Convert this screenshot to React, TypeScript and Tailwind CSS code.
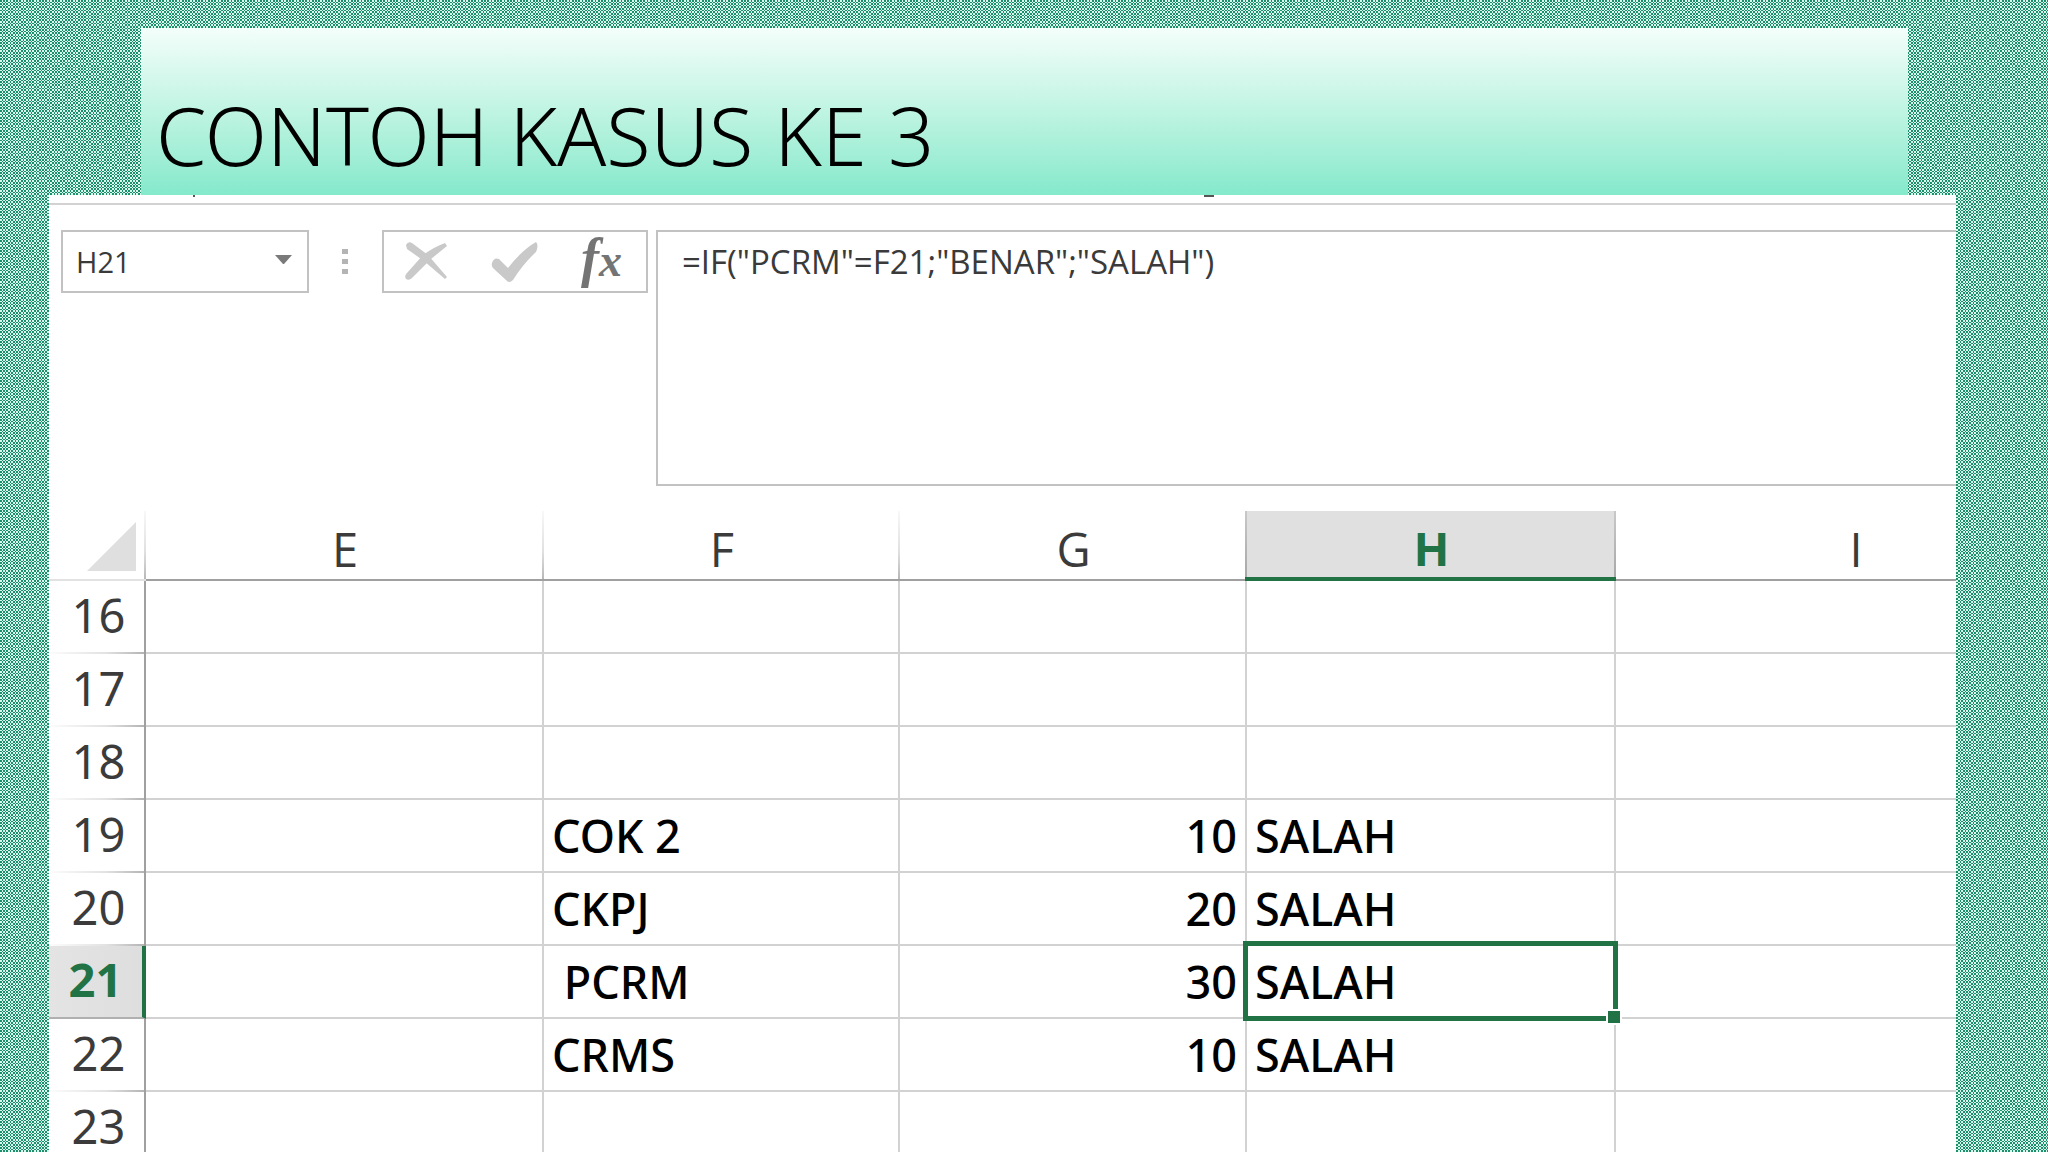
import type { ReactNode } from 'react';

type Row = { n: number; f?: string; g?: number; h?: string };

const rows: Row[] = [
  { n: 16 },
  { n: 17 },
  { n: 18 },
  { n: 19, f: 'COK 2', g: 10, h: 'SALAH' },
  { n: 20, f: 'CKPJ', g: 20, h: 'SALAH' },
  { n: 21, f: ' PCRM', g: 30, h: 'SALAH' },
  { n: 22, f: 'CRMS', g: 10, h: 'SALAH' },
  { n: 23 },
];

const columns = ['E', 'F', 'G', 'H', 'I'];
const ACTIVE_ROW = 21;
const ACTIVE_COL = 'H';

// Eight checker cells span thirteen pixels, which gives the woven look.
const edges = [0, 2, 3, 5, 6, 8, 10, 11, 13];
const tiles = Array.from({ length: 64 }, (_, i) => ({ x: i % 8, y: Math.floor(i / 8) })).filter(
  (t) => (t.x + t.y) % 2 === 0,
);

function CheckerBackdrop() {
  return (
    <svg className="absolute inset-0 h-full w-full" aria-hidden="true">
      <defs>
        <pattern id="checker" width="13" height="13" patternUnits="userSpaceOnUse">
          <rect width="13" height="13" fill="#d9f7ec" />
          {tiles.map((t) => (
            <rect
              key={`${t.x}-${t.y}`}
              x={edges[t.x]}
              y={edges[t.y]}
              width={edges[t.x + 1] - edges[t.x]}
              height={edges[t.y + 1] - edges[t.y]}
              fill="#1a8f69"
            />
          ))}
        </pattern>
      </defs>
      <rect width="100%" height="100%" fill="url(#checker)" />
    </svg>
  );
}

function CancelIcon() {
  return (
    <svg width="44" height="42" viewBox="0 0 44 42" fill="#c9c9c9" aria-hidden="true">
      <path d="M2 4 Q4 0 8 2 L24 14 L43 36 L41 38 L20 20 L3 8 Z" />
      <path d="M41 2 L43 5 L27 18 L8 37 Q5 40 2 38 Q0 35 3 32 L19 14 Q30 6 41 2 Z" />
    </svg>
  );
}

function EnterIcon() {
  return (
    <svg width="48" height="44" viewBox="0 0 48 44" fill="#c9c9c9" aria-hidden="true">
      <path d="M1 23 Q3 17 8 19 L17 28 Q31 10 45 2 Q48 5 45 12 Q32 24 22 40 Q18 44 15 40 L3 29 Q0 27 1 23 Z" />
    </svg>
  );
}

function IconButton({ label, children }: { label: string; children: ReactNode }) {
  return (
    <button type="button" aria-label={label} className="flex h-full items-center justify-center">
      {children}
    </button>
  );
}

function FormulaBar() {
  return (
    <div className="flex items-start pl-3 pt-[25px] font-['Open_Sans',sans-serif] text-[#3a3a3a]">
      <div className="flex h-[63px] w-[248px] items-center border-2 border-[#c2c2c2] pl-[13px] pr-[15px]">
        <input
          aria-label="Name box"
          defaultValue="H21"
          className="min-w-0 flex-1 bg-transparent text-[29px] outline-none"
        />
        <button type="button" aria-label="Open name list" className="pb-1">
          <svg width="17" height="9" viewBox="0 0 17 9" fill="#7a7a7a" aria-hidden="true">
            <path d="M0 0 H17 L9 9 H8 Z" />
          </svg>
        </button>
      </div>
      <div className="ml-[33px] mr-[34px] flex h-[63px] flex-col items-center justify-center gap-[5px]">
        <span className="h-[5px] w-[6px] bg-[#b4b4b4]" />
        <span className="h-[5px] w-[6px] bg-[#b4b4b4]" />
        <span className="h-[5px] w-[6px] bg-[#b4b4b4]" />
      </div>
      <div className="mr-2 flex h-[63px] w-[266px] items-center justify-between border-2 border-[#c2c2c2] pl-5 pr-6">
        <IconButton label="Cancel">
          <CancelIcon />
        </IconButton>
        <IconButton label="Enter">
          <EnterIcon />
        </IconButton>
        <IconButton label="Insert function">
          <span className="flex items-baseline pb-2 font-['Liberation_Serif',serif] font-bold italic leading-none text-[#747474]">
            <span className="text-[54px]">f</span>
            <span className="text-[46px]">x</span>
          </span>
        </IconButton>
      </div>
      <textarea
        aria-label="Formula bar"
        spellCheck={false}
        defaultValue={'=IF("PCRM"=F21;"BENAR";"SALAH")'}
        className="h-[256px] min-w-0 flex-1 resize-none border-2 border-r-0 border-[#c2c2c2] pl-6 text-[33px] leading-[60px] outline-none"
      />
    </div>
  );
}

function ColumnHeader({ name }: { name: string }) {
  if (name === ACTIVE_COL) {
    return (
      <th
        scope="col"
        className="relative h-[70px] border-b-4 border-b-[#217346] bg-[#e0e0e0] bg-[linear-gradient(to_bottom,#c8c8c8,#a8a8a8)] bg-[length:2px_100%] bg-right bg-no-repeat p-0 pt-2 text-center font-bold text-[#217346]"
      >
        {name}
        <span className="absolute -left-0.5 bottom-0 top-0 w-0.5 bg-linear-to-b from-[#c8c8c8] to-[#a8a8a8]" />
        <span className="absolute -bottom-1 -left-0.5 h-1 w-0.5 bg-[#217346]" />
      </th>
    );
  }
  return (
    <th
      scope="col"
      className="h-[70px] border-b-2 border-[#a0a0a0] bg-[linear-gradient(to_bottom,#f8f8f8,#e0e0e0_60%,#b8b8b8)] bg-[length:2px_100%] bg-right bg-no-repeat p-0 pt-2 text-center font-normal"
    >
      {name}
    </th>
  );
}

function RowHeader({ n }: { n: number }) {
  if (n === ACTIVE_ROW) {
    return (
      <th
        scope="row"
        className="border-b-2 border-r-4 border-b-[#b0b0b0] border-r-[#217346] bg-linear-to-r from-[#e4e4e4] to-[#dedede] p-0 pb-1 text-center font-bold leading-none text-[#217346]"
      >
        {n}
      </th>
    );
  }
  return (
    <th
      scope="row"
      className="border-r-2 border-[#a0a0a0] bg-[linear-gradient(to_right,#fcfcfc,#e2e2e2_60%,#b4b4b4)] bg-[length:100%_2px] bg-bottom bg-no-repeat p-0 pb-1 pl-1 text-center font-normal leading-none"
    >
      {n}
    </th>
  );
}

function Cell({ children, className = '' }: { children?: ReactNode; className?: string }) {
  return <td className={`whitespace-pre border-b-2 border-r-2 border-[#d2d2d2] p-0 ${className}`}>{children}</td>;
}

function Grid() {
  return (
    <table className="mt-[25px] w-[2047px] table-fixed border-separate border-spacing-0 text-[#3b3b3b]">
      <colgroup>
        <col className="w-[97px]" />
        <col className="w-[398px]" />
        <col className="w-[356px]" />
        <col className="w-[347px]" />
        <col className="w-[369px]" />
        <col className="w-[480px]" />
      </colgroup>
      <thead className="font-['Open_Sans',sans-serif] text-[47px] leading-[58px]">
        <tr>
          <td className="border-b-2 border-[#e2e2e2] bg-[linear-gradient(to_bottom,#f8f8f8,#e0e0e0_60%,#b8b8b8)] bg-[length:2px_100%] bg-right bg-no-repeat p-0 pb-2 pr-2.5 align-bottom">
            <svg className="ml-auto block" width="49" height="49" viewBox="0 0 49 49" aria-hidden="true">
              <path d="M49 0 V49 H0 Z" fill="#dfdfdf" />
            </svg>
          </td>
          {columns.map((c) => (
            <ColumnHeader key={c} name={c} />
          ))}
        </tr>
      </thead>
      <tbody>
        {rows.map((r) => (
          <tr key={r.n} className="h-[73px] text-[47px] leading-[70px]">
            <RowHeader n={r.n} />
            <Cell />
            <Cell className="pl-2 text-[45px] font-medium text-black">{r.f}</Cell>
            <Cell className="pr-2 text-right text-[45px] font-medium text-black">{r.g}</Cell>
            <Cell className={r.n === ACTIVE_ROW ? 'relative z-10 pl-2 text-[45px] font-medium text-black' : 'pl-2 text-[45px] font-medium text-black'}>
              {r.h}
              {r.n === ACTIVE_ROW && (
                <>
                  <span className="absolute -bottom-1 -left-1 -right-1 -top-[5px] border-[5px] border-[#217346]" />
                  <span className="absolute -bottom-2 -right-2 size-4 bg-white p-0.5">
                    <span className="block size-3 bg-[#217346]" />
                  </span>
                </>
              )}
            </Cell>
            <Cell />
          </tr>
        ))}
      </tbody>
    </table>
  );
}

export default function App() {
  return (
    <main className="relative h-screen overflow-hidden font-['Noto_Sans',sans-serif]">
      <CheckerBackdrop />
      <div className="relative flex h-full flex-col pt-7">
        <header className="ml-[141px] mr-[140px] flex h-[167px] shrink-0 items-end bg-linear-to-b from-[#f3fefa] to-[#84e9cb] pb-2 pl-[15px]">
          <h1 className="text-[81px] font-light leading-[104px] text-black">CONTOH KASUS KE 3</h1>
        </header>
        <section className="ml-[49px] mr-[92px] min-h-0 flex-1 overflow-hidden bg-white">
          <div className="flex h-[10px] items-start border-b-2 border-[#d2d2d2]">
            <span className="ml-36 h-0.5 w-0.5 bg-[#555555]" />
            <span className="ml-[1009px] h-0.5 w-2.5 bg-[#555555]" />
          </div>
          <FormulaBar />
          <Grid />
        </section>
      </div>
    </main>
  );
}
